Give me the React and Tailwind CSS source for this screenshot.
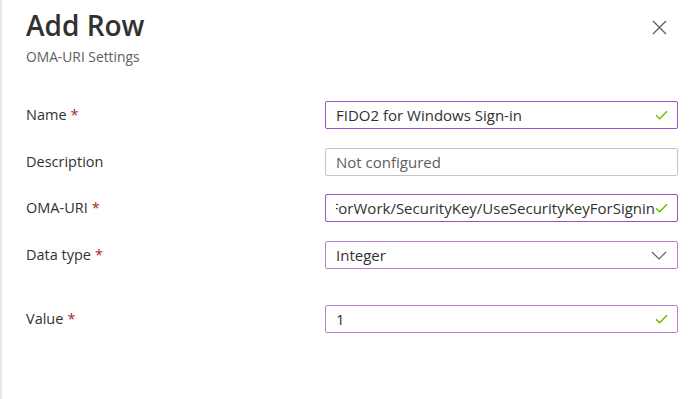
import React from 'react';

const font = { fontFamily: '"Open Sans", "Noto Sans", sans-serif' };

function Check() {
    return (
        <svg width="13" height="10" viewBox="0 0 13 10" className="shrink-0">
            <path d="M1 5.2 L4.6 8.8 L12 1.2" fill="none" stroke="#6bb700" strokeWidth="1.3" />
        </svg>
    );
}

function Chevron() {
    return (
        <svg width="16" height="9" viewBox="0 0 16 9" className="shrink-0">
            <path d="M1 1 L8 8 L15 1" fill="none" stroke="#605e5c" strokeWidth="1.2" />
        </svg>
    );
}

function Label({ text, required }) {
    return (
        <div className="w-[299px] shrink-0 text-[14.5px] text-[#323130]">
            {text}
            {required && <span className="text-[#a4262c] ml-[4px]">*</span>}
        </div>
    );
}

function Row({ label, required, children, className = '' }) {
    return (
        <div className={`flex items-center ${className}`}>
            <Label text={label} required={required} />
            {children}
        </div>
    );
}

export default function App() {
    return (
        <div className="w-[700px] h-[399px] bg-white border-l-2 border-[#e6e6e6] overflow-hidden" style={font}>
            <div className="pl-[24px] pr-[22px]">
                {/* Header */}
                <div className="flex justify-between items-start pt-[6px]">
                    <div>
                        <h1 className="text-[28px] leading-[38px] font-semibold text-[#323130]">Add Row</h1>
                        <p className="text-[13.8px] leading-[18px] mt-[4px] text-[#605e5c]">OMA-URI Settings</p>
                    </div>
                    <button className="mt-[14px] mr-[11px]">
                        <svg width="15" height="15" viewBox="0 0 15 15">
                            <path d="M1 1 L14 14 M14 1 L1 14" stroke="#605e5c" strokeWidth="1.3" />
                        </svg>
                    </button>
                </div>

                {/* Form */}
                <div className="mt-[35px] flex flex-col">
                    <Row label="Name" required>
                        <div className="flex-1 h-[28px] border border-[#9b4fc2] rounded-[2px] flex items-center pl-[10px] pr-[9px] text-[15px] text-[#323130]">
                            <span className="flex-1">FIDO2 for Windows Sign-in</span>
                            <Check />
                        </div>
                    </Row>

                    <Row label="Description" className="mt-[19px]">
                        <div className="flex-1 h-[28px] border border-[#c8c6c4] rounded-[2px] flex items-center pl-[10px] text-[15px] text-[#605e5c]">
                            Not configured
                        </div>
                    </Row>

                    <Row label="OMA-URI" required className="mt-[18px]">
                        <div className="flex-1 h-[28px] border border-[#9b4fc2] rounded-[2px] flex items-center pl-[10px] pr-[9px] text-[15px] text-[#323130] min-w-0">
                            <div className="flex-1 overflow-hidden flex justify-end whitespace-nowrap">
                                <span className="shrink-0">./Vendor/MSFT/PassportForWork/SecurityKey/UseSecurityKeyForSignin</span>
                            </div>
                            <Check />
                        </div>
                    </Row>

                    <Row label="Data type" required className="mt-[19px]">
                        <div className="flex-1 h-[28px] border border-[#b57fd3] rounded-[2px] flex items-center justify-between pl-[10px] pr-[10px] text-[15px] text-[#323130]">
                            <span>Integer</span>
                            <Chevron />
                        </div>
                    </Row>

                    <Row label="Value" required className="mt-[36px]">
                        <div className="flex-1 h-[28px] border border-[#b57fd3] rounded-[2px] flex items-center justify-between pl-[10px] pr-[9px] text-[15px] text-[#323130]">
                            <span>1</span>
                            <Check />
                        </div>
                    </Row>
                </div>
            </div>
        </div>
    );
}
